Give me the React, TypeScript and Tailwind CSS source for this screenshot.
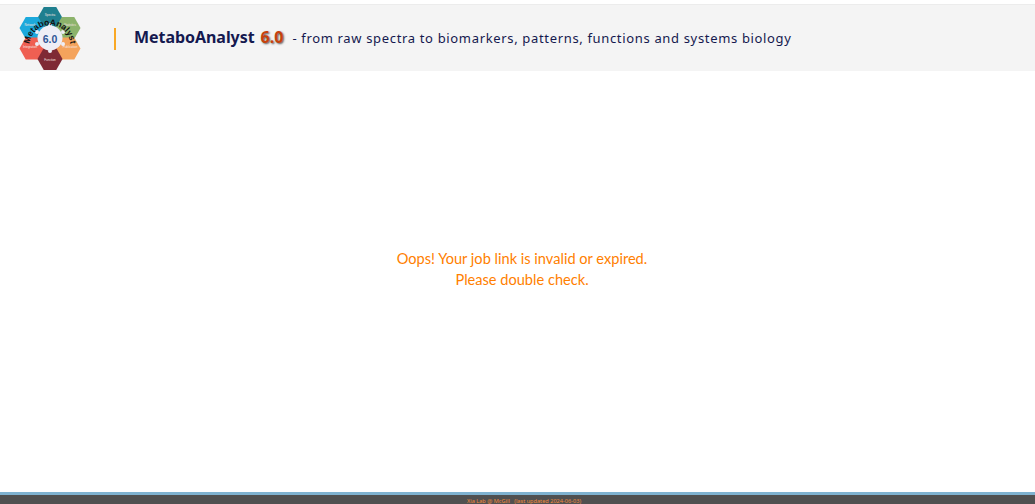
const hex = (cx: number, cy: number) => {
  const r = 12.5;
  const h = 11;
  return `${cx - r},${cy} ${cx - r / 2},${cy - h} ${cx + r / 2},${cy - h} ${cx + r},${cy} ${cx + r / 2},${cy + h} ${cx - r / 2},${cy + h}`;
};

const cells = [
  { x: 32, y: 13, lx: 32, ly: 11, fill: "#1f7f8f", label: "Spectra" },
  { x: 14, y: 23, lx: 12, ly: 21, fill: "#1ca9dc", label: "Network" },
  { x: 50, y: 23, lx: 52, ly: 21, fill: "#8cb36b", label: "Statistics" },
  { x: 14, y: 43.5, lx: 12, ly: 43, fill: "#ef5f52", label: "Integration" },
  { x: 50, y: 43.5, lx: 52, ly: 43, fill: "#f4a35c", label: "Publication" },
  { x: 32, y: 54, lx: 32, ly: 56, fill: "#7f2a35", label: "Function" },
];

function Logo() {
  return (
    <svg width="64" height="65" viewBox="0 0 64 65" className="mb-0.5 shrink-0">
      {cells.map((c) => (
        <polygon key={c.label} points={hex(c.x, c.y)} fill={c.fill} />
      ))}
      {cells.map((c) => (
        <text key={c.label} x={c.lx} y={c.ly} textAnchor="middle" fontFamily="Liberation Sans, sans-serif" fontSize="3" fill="#f6e6e0">
          {c.label}
        </text>
      ))}
      <circle cx="32" cy="33" r="12.5" fill="#eeeef6" />
      <circle cx="32" cy="20" r="2" fill="#eeeef6" />
      <circle cx="45" cy="27" r="2" fill="#eeeef6" />
      <circle cx="19" cy="27" r="2" fill="#eeeef6" />
      <circle cx="45" cy="39" r="2" fill="#eeeef6" />
      <circle cx="19" cy="39" r="2" fill="#eeeef6" />
      <circle cx="32" cy="46" r="2" fill="#eeeef6" />
      <defs>
        <path id="arc" d="M12.1 45 A20.4 20.4 0 1 1 51.9 45" />
      </defs>
      <text fontFamily="Liberation Sans, sans-serif" fontSize="8.5" fontWeight="700" fill="#111" textAnchor="middle">
        <textPath href="#arc" startOffset="50%">MetaboAnalyst</textPath>
      </text>
      <text x="32" y="38" textAnchor="middle" fontFamily="Liberation Sans, sans-serif" fontSize="10.5" fontWeight="700" fill="#2f5597">6.0</text>
    </svg>
  );
}

export default function App() {
  return (
    <div className="flex h-[504px] flex-col overflow-hidden bg-white font-['Noto_Sans','Open_Sans',sans-serif]">
      <div className="h-[5px] border-b border-[#ececec] bg-white" />
      <header className="flex h-[66px] items-center bg-[#f4f4f4] pl-[18px]">
        <Logo />
        <div className="ml-[32px] mt-[1px] h-[22px] w-0.5 bg-[#f9a825]" />
        <div className="mb-[3px] ml-[18px] flex items-baseline text-[#14194f]">
          <span className="text-[16px] font-bold tracking-[-0.05px]">MetaboAnalyst</span>
          <span className="ml-[6px] text-[16px] font-bold text-[#c8410b] [text-shadow:1px_1px_2px_#555]">6.0</span>
          <span className="ml-[9px] text-[13px] tracking-[0.66px]">- from raw spectra to biomarkers, patterns, functions and systems biology</span>
        </div>
      </header>
      <main className="flex flex-1 flex-col items-center justify-center pb-[26px] pl-[9px] text-center font-['Lato','Noto_Sans',sans-serif] text-[14.6px] leading-[21px] text-[#ff8000]">
        <p>Oops! Your job link is invalid or expired.</p>
        <p>Please double check.</p>
      </main>
      <footer className="h-3 border-t-[3px] border-[#7fb2d0] bg-[#505050] pl-[13px] text-center text-[5.6px] leading-[13px] text-[#f08a3c]">
        Xia Lab @ McGill &nbsp; (last updated 2024-06-03)
      </footer>
    </div>
  );
}
